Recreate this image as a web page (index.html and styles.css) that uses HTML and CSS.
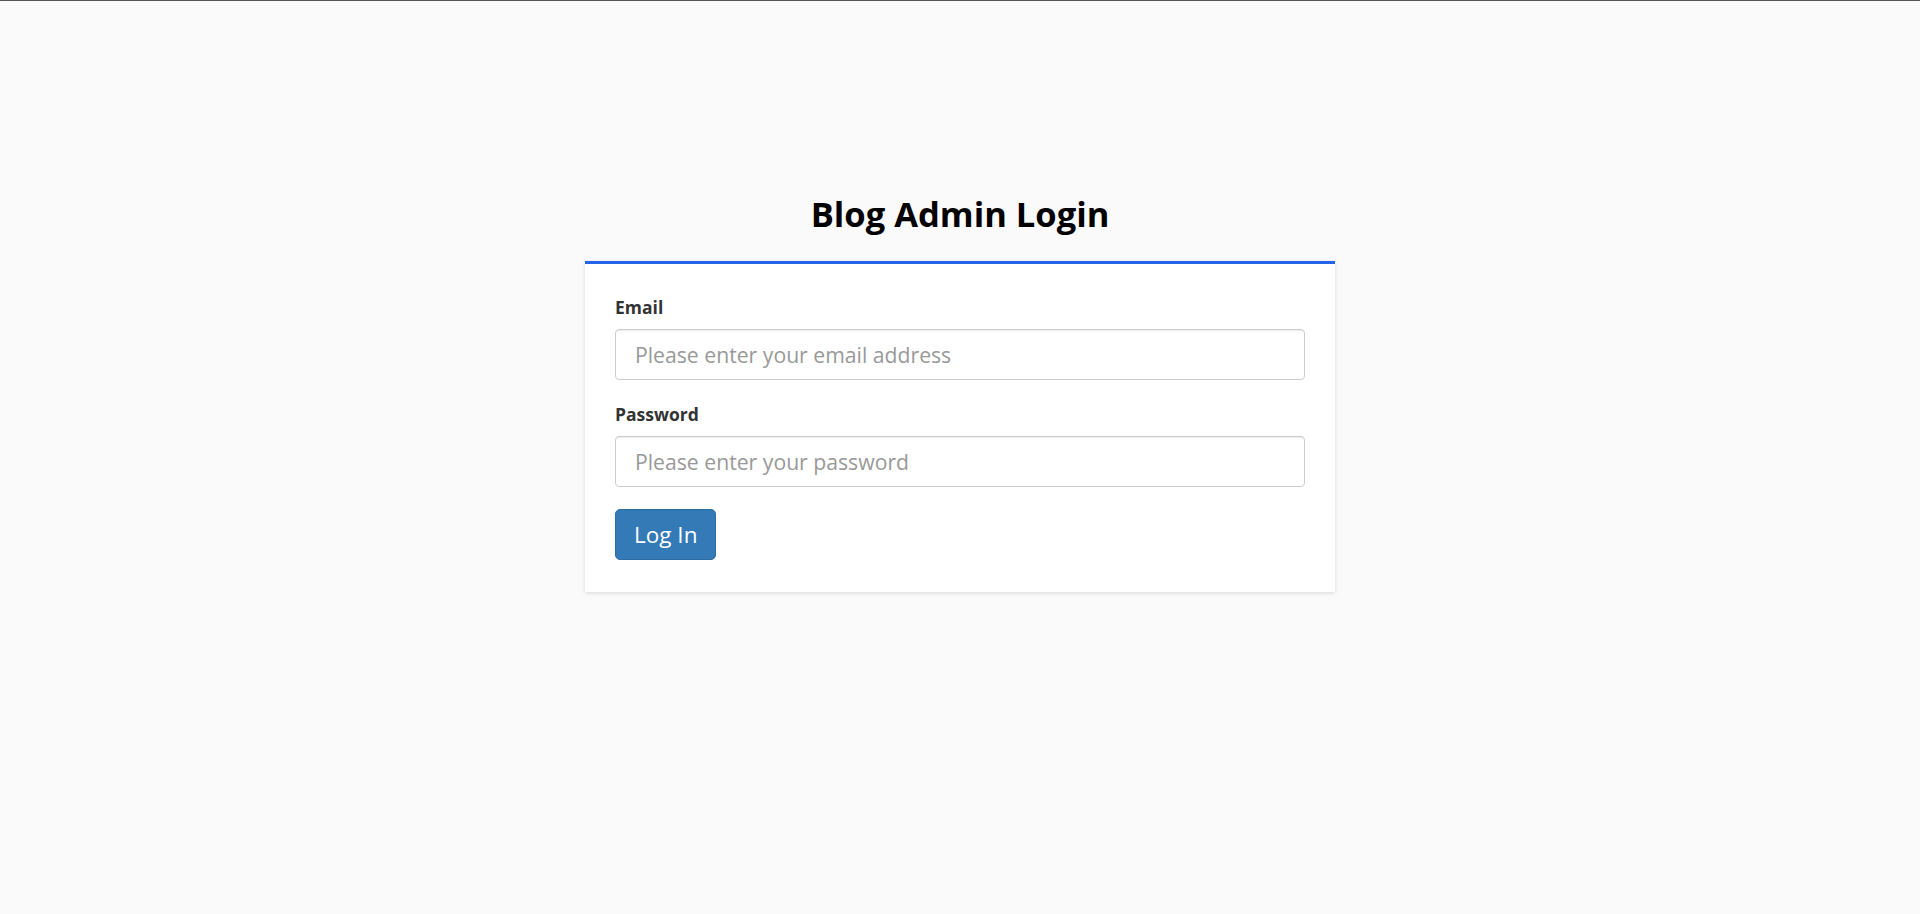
FILE: index.html
```html
<!DOCTYPE html>
<html lang="en">
<head>
<meta charset="utf-8">
<title>Blog Admin Login</title>
<link rel="stylesheet" href="styles.css">
</head>
<body>
<main class="page">
  <h1 class="title">Blog Admin Login</h1>
  <form class="card">
    <div class="field">
      <label class="label" for="email">Email</label>
      <input class="input" id="email" type="email" placeholder="Please enter your email address">
    </div>
    <div class="field">
      <label class="label" for="password">Password</label>
      <input class="input" id="password" type="password" placeholder="Please enter your password">
    </div>
    <button class="btn" type="button">Log In</button>
  </form>
</main>
</body>
</html>
```

FILE: styles.css
```css
html, body {
  margin: 0;
  padding: 0;
}
html {
  background: #fafafa;
}
body {
  border-top: 1px solid #555;
  font-family: "Open Sans", "Noto Sans", "Liberation Sans", sans-serif;
  color: #333;
}
.page {
  display: flex;
  flex-direction: column;
  align-items: center;
  padding-top: 192px;
  padding-bottom: 40px;
}
.title {
  margin: 0 0 26px;
  font-size: 34.5px;
  line-height: 42px;
  font-weight: 700;
  color: #000;
}
.card {
  width: 750px;
  box-sizing: border-box;
  background: #fff;
  border-top: 3px solid #2563eb;
  box-shadow: 0 1px 4px rgba(0,0,0,0.14);
  padding: 31px 30px 32px;
  display: flex;
  flex-direction: column;
  align-items: flex-start;
}
.field {
  width: 100%;
  margin-bottom: 22px;
  display: flex;
  flex-direction: column;
}
.label {
  font-size: 17.5px;
  line-height: 24px;
  font-weight: 700;
  color: #333;
  margin-bottom: 10px;
}
.input {
  height: 51px;
  box-sizing: border-box;
  border: 1px solid #ccc;
  border-radius: 4px;
  padding: 0 19px;
  font-family: inherit;
  font-size: 21.2px;
  color: #555;
  box-shadow: inset 0 1px 1px rgba(0,0,0,0.075);
}
.input::placeholder {
  color: #999;
}
.btn {
  height: 51px;
  box-sizing: border-box;
  padding: 0 18px;
  background: #337ab7;
  border: 1px solid #2e6da4;
  border-radius: 5px;
  color: #fff;
  font-family: inherit;
  font-size: 22.5px;
}
```
